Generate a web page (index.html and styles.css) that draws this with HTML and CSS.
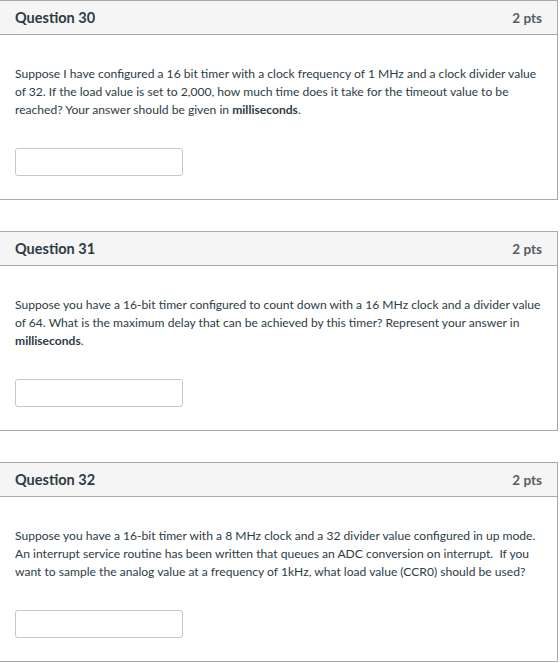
FILE: index.html
```html
<!DOCTYPE html>
<html>
<head>
<meta charset="utf-8">
<link rel="stylesheet" href="styles.css">
</head>
<body>
<div class="quiz">
  <section class="question">
    <header class="q-header">
      <span class="q-title">Question 30</span>
      <span class="q-points">2 pts</span>
    </header>
    <div class="q-body">
      <p class="q-text">Suppose I have configured a 16 bit timer with a clock frequency of 1 MHz and a clock divider value of 32. If the load value is set to 2,000, how much time does it take for the timeout value to be reached? Your answer should be given in <strong>milliseconds</strong>.</p>
      <input class="q-input" type="text">
    </div>
  </section>

  <section class="question">
    <header class="q-header">
      <span class="q-title">Question 31</span>
      <span class="q-points">2 pts</span>
    </header>
    <div class="q-body">
      <p class="q-text">Suppose you have a 16-bit timer configured to count down with a 16 MHz clock and a divider value of 64. What is the maximum delay that can be achieved by this timer? Represent your answer in <strong>milliseconds</strong>.</p>
      <input class="q-input" type="text">
    </div>
  </section>

  <section class="question">
    <header class="q-header">
      <span class="q-title">Question 32</span>
      <span class="q-points">2 pts</span>
    </header>
    <div class="q-body">
      <p class="q-text">Suppose you have a 16-bit timer with a 8 MHz clock and a 32 divider value configured in up mode.<br>An interrupt service routine has been written that queues an ADC conversion on interrupt.&nbsp; If you want to sample the analog value at a frequency of 1kHz, what load value (CCR0) should be used?</p>
      <input class="q-input" type="text">
    </div>
  </section>
</div>
</body>
</html>
```

FILE: styles.css
```css
html, body {
  margin: 0;
  padding: 0;
  background: #ffffff;
}

body {
  font-family: Lato, "Liberation Sans", sans-serif;
  color: #2d3b45;
}

.quiz {
  display: flex;
  flex-direction: column;
  gap: 31px;
  width: 558px;
}

.question {
  border: 1px solid #a9a9a9;
  border-left: 0;
  background: #fff;
}

.q-header {
  display: flex;
  justify-content: space-between;
  align-items: center;
  height: 33px;
  padding: 0 15px 0 15px;
  background: #f5f5f5;
  border-bottom: 1px solid #a9a9a9;
}

.q-title {
  font-weight: 700;
  font-size: 14.5px;
  color: #2d3b45;
}

.q-points {
  font-weight: 700;
  font-size: 13.5px;
  color: #555d63;
}

.q-body {
  padding: 30px 15px 23px 15px;
}

.q-text {
  margin: 0;
  font-size: 12.1px;
  line-height: 18px;
  color: #2d3b45;
}

.q-text strong {
  font-weight: 700;
}

.q-input {
  display: block;
  box-sizing: border-box;
  margin-top: 29px;
  width: 168px;
  height: 28px;
  border: 1px solid #c7c7c7;
  border-radius: 3px;
  background: #fff;
  padding: 0;
}
```
